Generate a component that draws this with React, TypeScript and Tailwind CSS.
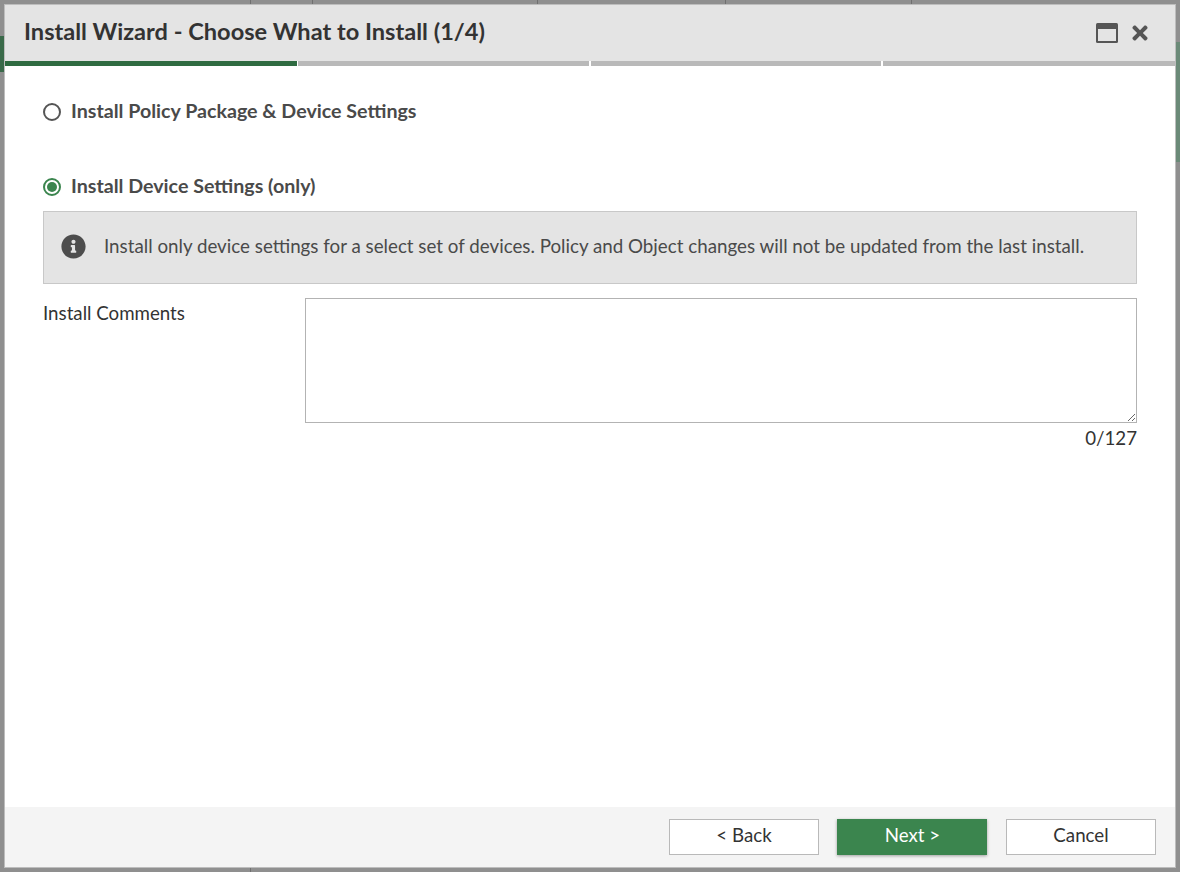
import { FaInfoCircle, FaTimes } from 'react-icons/fa'

function Radio({ checked }: { checked?: boolean }) {
  return (
    <span
      className={[
        'flex h-[18px] w-[18px] shrink-0 items-center justify-center rounded-full border-2 bg-white',
        checked ? 'border-[#3b854e]' : 'border-[#555555]',
      ].join(' ')}
    >
      {checked && <span className="h-[10px] w-[10px] rounded-full bg-[#3b854e]" />}
    </span>
  )
}

function MaximizeIcon() {
  return (
    <svg width="22" height="20" viewBox="0 0 22 20">
      <rect x="0" y="0" width="22" height="20" rx="1.5" fill="#555555" />
      <rect x="2" y="6" width="18" height="12" fill="#e4e4e4" />
    </svg>
  )
}

const steps = [
  'w-[292px] bg-[#2f6b41]',
  'ml-[1px] w-[291px] bg-[#b9b9b9]',
  'ml-[2px] w-[290px] bg-[#b9b9b9]',
  'ml-[2px] flex-1 bg-[#b9b9b9]',
]

// what shows of the dimmed page behind the dialog
const backdropBits = [
  'left-[250px] top-0 h-[4px] w-px bg-[#707070]',
  'left-[312px] top-0 h-[4px] w-px bg-[#707070]',
  'left-[537px] top-0 h-[4px] w-px bg-[#707070]',
  'left-[725px] top-0 h-[4px] w-px bg-[#707070]',
  'left-[911px] top-0 h-[4px] w-px bg-[#707070]',
  'left-[250px] bottom-0 h-[4px] w-px bg-[#707070]',
  'left-0 top-[36px] h-[36px] w-[4px] bg-[#3a6a4a]',
  'right-0 top-[42px] h-[120px] w-[4px] bg-[#6b8a78]',
]

export default function App() {
  return (
    <div className="relative h-[872px] w-[1180px] bg-[#8f8f8f] p-[4px] font-['Lato','Noto_Sans',sans-serif]">
      {backdropBits.map((cls) => (
        <div key={cls} className={`absolute ${cls}`} />
      ))}
      <div className="relative flex h-full w-full flex-col border border-[#bdbdbd] bg-white">
        <div className="flex h-[56px] shrink-0 items-center justify-between bg-[#e4e4e4] pl-[19px] pr-[27px]">
          <h1 className="pb-[2px] text-[23.6px] font-bold text-[#333333]">
            Install Wizard - Choose What to Install (1/4)
          </h1>
          <div className="flex items-center gap-[14px]">
            <MaximizeIcon />
            <FaTimes className="h-[22px] w-[16px] text-[#555555]" />
          </div>
        </div>
        <div className="flex h-[5px] shrink-0">
          {steps.map((cls) => (
            <div key={cls} className={cls} />
          ))}
        </div>

        <div className="flex flex-1 flex-col px-[38px] pt-[33px]">
          <label className="flex h-[26px] items-center gap-[10px] text-[19.65px] font-bold text-[#4a4a4a]">
            <Radio />
            <span className="pb-[2px]">Install Policy Package &amp; Device Settings</span>
          </label>
          <label className="mt-[49px] flex h-[26px] items-center gap-[10px] text-[19.65px] font-bold text-[#4a4a4a]">
            <Radio checked />
            <span className="pb-[2px]">Install Device Settings (only)</span>
          </label>
          <div className="mt-[11px] flex h-[73px] items-center gap-[18px] border border-[#c8c8c8] bg-[#e4e4e4] pl-[17px] text-[18.76px] text-[#4a4a4a]">
            <FaInfoCircle className="mb-[2px] h-[25px] w-[25px] shrink-0 text-[#4d4d4d]" />
            <span className="pb-[2px]">
              Install only device settings for a select set of devices. Policy and Object changes will not be updated from the last install.
            </span>
          </div>
          <div className="mt-[14px] flex">
            <span className="w-[262px] shrink-0 pt-[2px] text-[18.72px] leading-[26px] text-[#333333]">
              Install Comments
            </span>
            <div className="flex flex-1 flex-col">
              <textarea className="block h-[125px] w-full border border-[#b3b3b3] bg-white" />
              <span className="mt-[2px] text-right text-[18.72px] leading-[26px] text-[#333333]">0/127</span>
            </div>
          </div>
        </div>

        <div className="flex h-[60px] shrink-0 items-center justify-end bg-[#f4f4f4] pr-[19px]">
          <button className="h-[36px] w-[150px] border border-[#b9b9b9] bg-white pb-[4px] text-[18.72px] text-[#333333]">
            &lt; Back
          </button>
          <button className="ml-[18px] h-[36px] w-[150px] bg-[#3b854e] pb-[4px] pl-[1px] text-[18.72px] text-white shadow-[0_1px_3px_rgba(0,0,0,0.35)]">
            Next &gt;
          </button>
          <button className="ml-[19px] h-[36px] w-[150px] border border-[#b9b9b9] bg-white pb-[4px] text-[18.72px] text-[#333333]">
            Cancel
          </button>
        </div>
      </div>
    </div>
  )
}
